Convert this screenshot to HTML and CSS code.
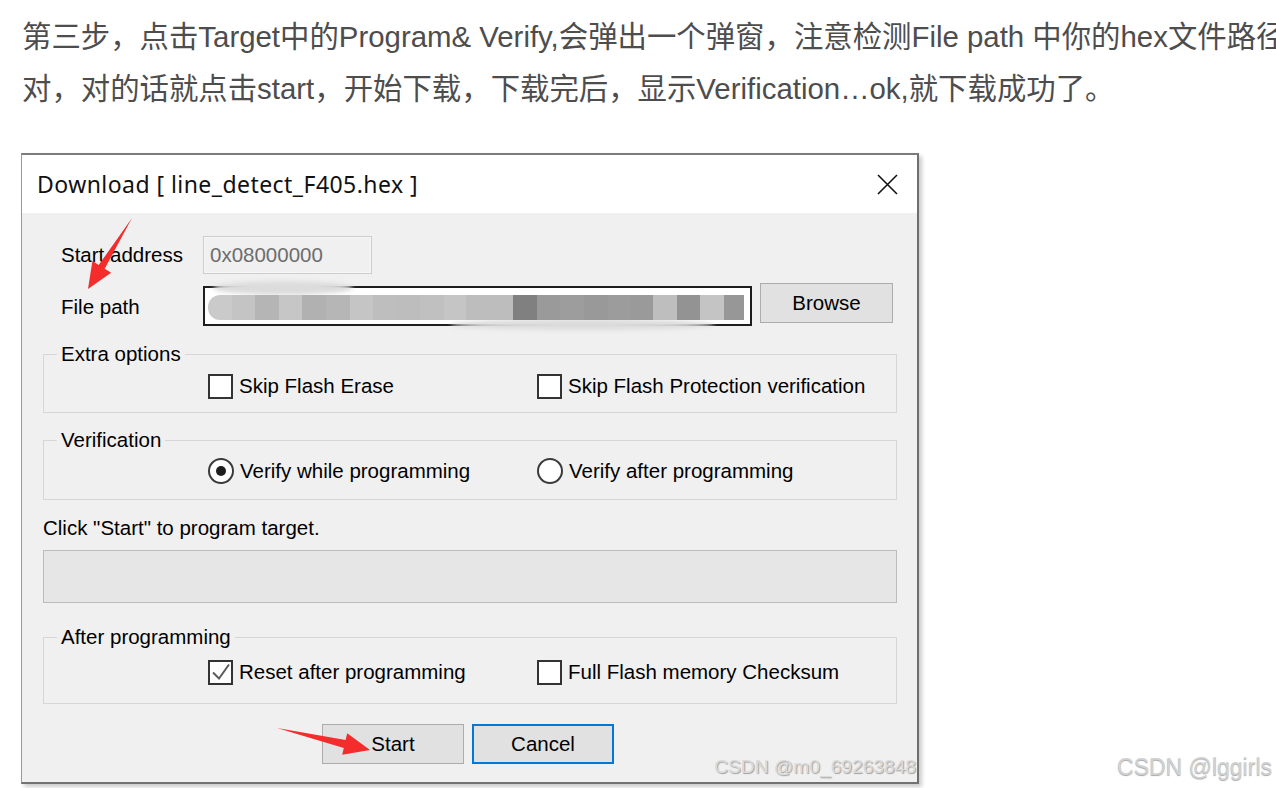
FILE: index.html
```html
<!DOCTYPE html>
<html lang="zh-CN">
<head>
<meta charset="utf-8">
<title>Program &amp; Verify</title>
<link rel="stylesheet" href="styles.css">
</head>
<body>
<p class="intro">
  <span class="line">第三步，点击Target中的Program&amp; Verify,会弹出一个弹窗，注意检测File path 中你的hex文件路径</span>
  <span class="line">对，对的话就点击start，开始下载，下载完后，显示Verification…ok,就下载成功了。</span>
</p>

<div class="figure">
  <div class="dialog">
    <div class="titlebar">
      <span class="title">Download [ line_detect_F405.hex ]</span>
      <svg class="close" width="21" height="21" viewBox="0 0 21 21" aria-label="Close">
        <path d="M1 1 L20 20 M20 1 L1 20" stroke="#111" stroke-width="1.6" fill="none"/>
      </svg>
    </div>
    <div class="dlg-body">
      <div class="field-row row-addr">
        <span class="lbl">Start address</span>
        <div class="input input-disabled">0x08000000</div>
      </div>
      <div class="field-row row-file">
        <span class="lbl">File path</span>
        <div class="input input-path"><div class="mosaic"></div></div>
        <button class="btn btn-browse">Browse</button>
      </div>

      <fieldset class="group g1">
        <legend>Extra options</legend>
        <div class="opts">
          <label class="opt"><span class="box"></span>Skip Flash Erase</label>
          <label class="opt"><span class="box"></span>Skip Flash Protection verification</label>
        </div>
      </fieldset>

      <fieldset class="group g2">
        <legend>Verification</legend>
        <div class="opts">
          <label class="opt"><span class="radio on"></span>Verify while programming</label>
          <label class="opt"><span class="radio"></span>Verify after programming</label>
        </div>
      </fieldset>

      <div class="status">Click &quot;Start&quot; to program target.</div>
      <div class="progress"></div>

      <fieldset class="group g3">
        <legend>After programming</legend>
        <div class="opts">
          <label class="opt"><span class="box checked"><svg width="21" height="21" viewBox="0 0 21 21"><path d="M3 10.5 L9 16.5 L19 2.5" stroke="#5a5a5a" stroke-width="2" fill="none"/></svg></span>Reset after programming</label>
          <label class="opt"><span class="box"></span>Full Flash memory Checksum</label>
        </div>
      </fieldset>

      <div class="buttons">
        <button class="btn btn-action">Start</button>
        <button class="btn btn-action btn-default">Cancel</button>
      </div>
      <div class="wm-inner">CSDN @m0_69263848</div>
    </div>
  </div>

  <svg class="arrows" width="1276" height="631" viewBox="0 0 1276 631">
    <polygon points="132,65 104.7,115.7 111.1,119.7 88,136 92.4,108.1 98.7,112.1" fill="#f42c2c"/>
    <polygon points="277,575 345.6,587.1 347.2,580.3 370,597 342.2,601.7 343.8,594.9" fill="#f42c2c"/>
  </svg>
  <div class="wm">CSDN @lggirls</div>
</div>
</body>
</html>
```

FILE: styles.css
```css
html, body {
  margin: 0;
  background: #fff;
}
body {
  width: 1276px;
  height: 788px;
  overflow: hidden;
}

.intro {
  margin: 0;
  padding: 11px 0 0 22px;
  font-family: "Liberation Sans", "Noto Sans CJK SC", sans-serif;
  font-size: 29.4px;
  line-height: 52px;
  color: #4d4d4d;
}
.line {
  display: block;
  height: 52px;
  white-space: nowrap;
}

.figure {
  position: relative;
  margin-top: 38px;
  height: 631px;
}

.dialog {
  position: relative;
  margin-left: 21px;
  width: 898px;
  box-sizing: border-box;
  border: 1px solid #9a9a9a;
  border-top: 2px solid #7c7c7c;
  border-right: 2px solid #6f6f6f;
  border-bottom: 2px solid #737373;
  box-shadow: 3px 3px 4px rgba(0, 0, 0, 0.2);
  background: #f0f0f0;
  font-family: "Liberation Sans", Arial, sans-serif;
  font-size: 20.5px;
  color: #000;
}

.titlebar {
  height: 58px;
  background: #fff;
  display: flex;
  align-items: center;
  justify-content: space-between;
  padding: 0 19px 0 15px;
}
.title {
  font-family: "Noto Sans", sans-serif;
  font-size: 23px;
  letter-spacing: 0.45px;
  color: #111;
}
.close {
  display: block;
}

.dlg-body {
  position: relative;
  height: 569px;
  box-sizing: border-box;
  padding: 23px 20px 0 21px;
  display: flex;
  flex-direction: column;
}

.field-row {
  display: flex;
  padding-left: 18px;
}
.lbl {
  width: 142px;
  flex: none;
  line-height: 24px;
}
.row-addr {
  height: 38px;
  align-items: center;
}
.input {
  box-sizing: border-box;
  flex: none;
}
.input-disabled {
  width: 169px;
  height: 38px;
  border: 1px solid #cdcdcd;
  box-shadow: inset 0 0 0 1px #f6f6f6;
  background: #f0f0f0;
  color: #6d6d6d;
  padding-left: 6px;
  display: flex;
  align-items: center;
}

.row-file {
  margin-top: 9px;
  height: 43px;
  align-items: flex-start;
}
.row-file .lbl {
  margin-top: 12px;
}
.input-path {
  position: relative;
  margin-top: 3px;
  width: 549px;
  height: 40px;
  border: 2px solid #1e1e1e;
  background: #fff;
  padding: 7px 6px 0 3px;
}
.input-path::before,
.input-path::after {
  content: "";
  position: absolute;
  background: #dcdcdc;
  border-radius: 50%;
  filter: blur(2px);
}
.input-path::before {
  left: 8px;
  top: -7px;
  width: 140px;
  height: 14px;
}
.input-path::after {
  left: 245px;
  bottom: -6px;
  width: 265px;
  height: 11px;
}
.mosaic {
  position: relative;
  z-index: 1;
  width: 536px;
  height: 25px;
  border-radius: 12px 0 0 12px;
  filter: blur(0.5px);
  background: linear-gradient(90deg,
    #cacaca 0 24px, #c4c4c4 24px 47px, #b5b5b5 47px 71px, #c6c6c6 71px 94px,
    #b1b1b1 94px 118px, #b6b6b6 118px 142px, #c5c5c5 142px 165px, #bebebe 165px 189px,
    #bdbdbd 189px 212px, #c0c0c0 212px 236px, #c5c5c5 236px 258px, #bdbdbd 258px 305px,
    #808080 305px 329px, #9a9a9a 329px 352px, #9d9d9d 352px 376px, #999999 376px 400px,
    #9c9c9c 400px 423px, #9a9a9a 423px 445px, #bebebe 445px 469px, #939393 469px 492px,
    #c4c4c4 492px 516px, #979797 516px 536px);
}

.btn {
  font: inherit;
  color: #000;
  background: #e1e1e1;
  border: 1px solid #adadad;
  padding: 0;
  box-sizing: border-box;
}
.btn-browse {
  margin-left: 8px;
  width: 133px;
  height: 40px;
}

.group {
  margin: 0;
  border: 1px solid #d6d6d6;
  min-width: 0;
}
.group legend {
  margin-left: 13px;
  padding: 0 4px;
  line-height: 24px;
}
.g1 {
  margin-top: 16px;
  padding: 7px 0 13px;
}
.g2 {
  margin-top: 15px;
  padding: 6px 0 15px;
}
.g3 {
  margin-top: 22px;
  padding: 10px 0 18px;
}
.opts {
  display: grid;
  grid-template-columns: 329px auto;
  padding-left: 164px;
  height: 26px;
  align-items: center;
}
.opt {
  display: flex;
  align-items: center;
  gap: 6px;
  white-space: nowrap;
}
.box {
  width: 25px;
  height: 25px;
  box-sizing: border-box;
  border: 2px solid #333;
  background: #fff;
  flex: none;
}
.box svg {
  display: block;
}
.radio {
  width: 26px;
  height: 26px;
  box-sizing: border-box;
  border-radius: 50%;
  border: 2px solid #3a3a3a;
  background: #fff;
  flex: none;
  display: flex;
  align-items: center;
  justify-content: center;
}
.radio.on::after {
  content: "";
  width: 10px;
  height: 10px;
  border-radius: 50%;
  background: #1e1e1e;
}

.status {
  margin-top: 16px;
  line-height: 24px;
}
.progress {
  margin-top: 10px;
  height: 53px;
  box-sizing: border-box;
  border: 1px solid #bcbcbc;
  background: #e6e6e6;
}

.buttons {
  margin-top: 20px;
  display: flex;
  justify-content: center;
  gap: 8px;
  padding-right: 4px;
}
.btn-action {
  width: 142px;
  height: 40px;
}
.btn-default {
  border: 2px solid #0078d7;
}

.wm-inner {
  position: absolute;
  right: 1px;
  bottom: 4px;
  font-size: 19.2px;
  line-height: 22px;
  color: #dadada;
  text-shadow: 1px 1px 1px #a0a0a0;
  white-space: nowrap;
}

.arrows {
  position: absolute;
  left: 0;
  top: 0;
  pointer-events: none;
}

.wm {
  position: absolute;
  right: 4px;
  bottom: 4px;
  font-family: "Liberation Sans", Arial, sans-serif;
  font-size: 23px;
  line-height: 26px;
  color: #d2d2d2;
  text-shadow: 0 1px 1px #a8a8a8;
  white-space: nowrap;
}
```
